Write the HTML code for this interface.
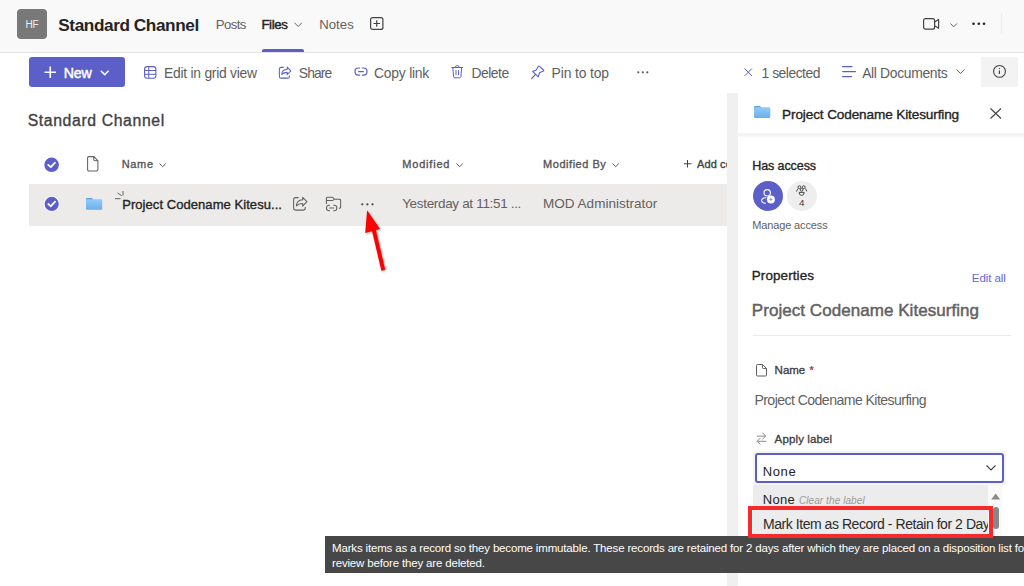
<!DOCTYPE html>
<html><head><meta charset="utf-8">
<style>
html,body{margin:0;padding:0;width:1024px;height:586px;overflow:hidden;background:#ffffff;font-family:"Liberation Sans",sans-serif;}
.a{position:absolute;}
.t{position:absolute;white-space:nowrap;line-height:1;font-family:"Liberation Sans",sans-serif;}
svg{position:absolute;overflow:visible;}
</style></head><body>
<!-- header -->
<div class="a" style="left:0;top:0;width:1024px;height:52px;background:#f9f9f9;"></div>
<div class="a" style="left:0;top:52px;width:1024px;height:1px;background:#e3e3e3;"></div>
<div class="a" style="left:17px;top:9px;width:30px;height:30px;border-radius:4px;background:#787878;"></div>
<div class="t" style="left:25.6px;top:19.9px;font-size:10px;color:#f0f0f0;letter-spacing:-0.4px;">HF</div>
<div class="a" style="left:261.5px;top:49px;width:42.5px;height:3px;border-radius:2px 2px 0 0;background:#5b5fc7;"></div>
<!-- files chevron -->
<svg style="left:294px;top:22px" width="9" height="6"><path d="M0.5 0.8 L4.2 4.5 L7.9 0.8" fill="none" stroke="#616161" stroke-width="1"/></svg>
<!-- plus square -->
<svg style="left:370px;top:17px" width="14" height="13"><rect x="0.6" y="0.6" width="12.3" height="11.8" rx="2" fill="none" stroke="#424242" stroke-width="1.2"/><path d="M6.75 3.2 V9.8 M3.5 6.5 H10" stroke="#424242" stroke-width="1.2"/></svg>
<!-- camera -->
<svg style="left:923px;top:17.5px" width="17" height="12"><rect x="0.6" y="0.6" width="11" height="10.6" rx="2" fill="none" stroke="#424242" stroke-width="1.2"/><path d="M11.6 4 L15.6 1.6 V10.2 L11.6 7.8" fill="none" stroke="#424242" stroke-width="1.2" stroke-linejoin="round"/></svg>
<svg style="left:950px;top:22.5px" width="8" height="5"><path d="M0.5 0.5 L3.7 3.8 L6.9 0.5" fill="none" stroke="#616161" stroke-width="1"/></svg>
<svg style="left:972px;top:22px" width="14" height="4"><circle cx="1.5" cy="1.8" r="1.3" fill="#242424"/><circle cx="6.8" cy="1.8" r="1.3" fill="#242424"/><circle cx="12" cy="1.8" r="1.3" fill="#242424"/></svg>
<div class="a" style="left:1001px;top:13px;width:1px;height:21px;background:#ececec;"></div>

<!-- toolbar -->
<div class="a" style="left:29px;top:57px;width:96px;height:30px;border-radius:3px;background:#5b5fc7;"></div>
<svg style="left:43.5px;top:65.5px" width="13" height="13"><path d="M6.25 0.5 V12 M0.5 6.25 H12" stroke="#fff" stroke-width="1.6"/></svg>
<svg style="left:100px;top:70px" width="10" height="6"><path d="M0.8 0.8 L4.7 4.6 L8.6 0.8" fill="none" stroke="#fff" stroke-width="1.5"/></svg>
<!-- grid icon -->
<svg style="left:144px;top:65.5px" width="13" height="13"><rect x="0.6" y="0.6" width="11.3" height="11.6" rx="2.5" fill="none" stroke="#5b5fc7" stroke-width="1.1"/><path d="M4.8 0.6 V12.2 M0.6 4.5 H11.9 M0.6 8.3 H11.9" stroke="#5b5fc7" stroke-width="1"/></svg>
<!-- share icon -->
<svg style="left:278px;top:65.5px" width="16" height="15"><g transform="scale(0.86)"><path d="M6.6 1.6 H3.6 Q1.6 1.6 1.6 3.6 V12.1 Q1.6 14.1 3.6 14.1 H11.3 Q13.3 14.1 13.3 12.1 V11" fill="none" stroke="#5b5fc7" stroke-width="1.2"/><path d="M4.4 9.9 Q4.6 4.2 10.7 3.8 V1.3 L14.9 5.7 L10.7 10.2 V7.4 Q6.5 7.4 4.4 9.9 Z" fill="none" stroke="#5b5fc7" stroke-width="1.2" stroke-linejoin="round"/></g></svg>
<!-- link icon -->
<svg style="left:353.5px;top:67px" width="15" height="10"><path d="M5.6 1 H4.3 Q1 1 1 4.6 Q1 8.2 4.3 8.2 H5.6 M8.4 1 H9.7 Q13 1 13 4.6 Q13 8.2 9.7 8.2 H8.4 M4.6 4.6 H9.4" fill="none" stroke="#5b5fc7" stroke-width="1.2" stroke-linecap="round"/></svg>
<!-- trash -->
<svg style="left:451px;top:65px" width="13" height="14"><path d="M0.5 2.5 H12 M4.3 2.5 Q4.3 0.6 6.25 0.6 Q8.2 0.6 8.2 2.5 M1.8 2.5 L2.6 11.6 Q2.8 12.8 4 12.8 H8.5 Q9.7 12.8 9.9 11.6 L10.7 2.5 M5 5.2 V10.2 M7.5 5.2 V10.2" fill="none" stroke="#5b5fc7" stroke-width="1"/></svg>
<!-- pin -->
<svg style="left:527px;top:62px" width="20" height="20"><path d="M5.6 9.4 L9.2 8.0 L11.3 4.5 Q11.9 3.7 12.6 4.3 L16.5 8.0 Q17.1 8.7 16.3 9.1 L12.6 10.8 L11.2 14.9 Z M4.6 16.6 L8 12.8" fill="none" stroke="#5b5fc7" stroke-width="1.1" stroke-linejoin="round" stroke-linecap="round"/></svg>
<svg style="left:637px;top:71px" width="12" height="3"><circle cx="1.3" cy="1.3" r="1.1" fill="#5e5e5e"/><circle cx="5.8" cy="1.3" r="1.1" fill="#5e5e5e"/><circle cx="10.3" cy="1.3" r="1.1" fill="#5e5e5e"/></svg>
<!-- right toolbar -->
<svg style="left:743.5px;top:67.5px" width="9" height="9"><path d="M0.5 0.5 L8 8 M8 0.5 L0.5 8" stroke="#5b5fc7" stroke-width="1"/></svg>
<svg style="left:842px;top:65px" width="15" height="13"><path d="M0.6 1.6 H10 M0.6 6.6 H13.5 M0.6 11.6 H9.5" stroke="#5b5fc7" stroke-width="1.2" stroke-linecap="round"/></svg>
<svg style="left:956px;top:69px" width="10" height="6"><path d="M0.5 0.5 L4.5 4.5 L8.5 0.5" fill="none" stroke="#616161" stroke-width="1"/></svg>
<div class="a" style="left:981px;top:57px;width:37px;height:30px;background:#f3f3f3;border-radius:2px;"></div>
<svg style="left:993px;top:65px" width="14" height="14"><circle cx="6.5" cy="6.4" r="5.9" fill="none" stroke="#424242" stroke-width="1.1"/><path d="M6.4 5.4 V9" stroke="#424242" stroke-width="1.2"/><circle cx="6.4" cy="3.6" r="0.7" fill="#424242"/></svg>

<!-- list area -->
<svg style="left:43.5px;top:156.5px" width="16" height="16"><circle cx="7.6" cy="7.8" r="7.3" fill="#5b5fc7"/><path d="M4.2 7.9 L6.8 10.1 L11 5.6" fill="none" stroke="#fff" stroke-width="1.8" stroke-linecap="round" stroke-linejoin="round"/></svg>
<svg style="left:86.5px;top:156px" width="13" height="16"><path d="M1.9 0.6 H6.9 L10.9 4.6 V13.5 Q10.9 14.9 9.5 14.9 H1.9 Q0.6 14.9 0.6 13.5 V1.9 Q0.6 0.6 1.9 0.6 Z M6.7 0.8 V3.3 Q6.7 4.8 8.2 4.8 H10.7" fill="none" stroke="#616161" stroke-width="1.05"/></svg>
<svg style="left:159px;top:163px" width="8" height="5"><path d="M0.5 0.5 L3.7 3.7 L6.9 0.5" fill="none" stroke="#616161" stroke-width="1"/></svg>
<svg style="left:456px;top:163px" width="8" height="5"><path d="M0.5 0.5 L3.7 3.7 L6.9 0.5" fill="none" stroke="#616161" stroke-width="1"/></svg>
<svg style="left:612px;top:163px" width="8" height="5"><path d="M0.5 0.5 L3.7 3.7 L6.9 0.5" fill="none" stroke="#616161" stroke-width="1"/></svg>
<svg style="left:684px;top:160px" width="8" height="8"><path d="M3.5 0 V7.5 M0 3.75 H7.5" stroke="#424242" stroke-width="1"/></svg>
<div style="position:absolute;left:697px;top:159.3px;width:30px;height:14px;overflow:hidden;"><div class="t" style="left:0;top:0;font-size:11px;font-weight:400;color:#424242;letter-spacing:0.1px;-webkit-text-stroke:0.35px #424242;">Add column</div></div>

<div class="a" style="left:29px;top:184px;width:698px;height:42px;background:#edebe9;"></div>
<svg style="left:42.5px;top:195px" width="18" height="18"><circle cx="8.7" cy="8.9" r="8" fill="#fff"/><circle cx="8.7" cy="8.9" r="7.1" fill="#5b5fc7"/><path d="M5.3 9 L7.9 11.2 L12.1 6.7" fill="none" stroke="#fff" stroke-width="1.8" stroke-linecap="round" stroke-linejoin="round"/></svg>
<svg style="left:86px;top:198px" width="17" height="12"><defs><linearGradient id="fg" x1="0" y1="0" x2="0" y2="1"><stop offset="0" stop-color="#93cbf7"/><stop offset="1" stop-color="#6aafec"/></linearGradient></defs><path d="M0 1 Q0 0 1 0 H6 L7.2 1.2 V4 H0 Z" fill="#5aa2e4"/><rect x="0" y="1.2" width="16.2" height="10.6" rx="0.8" fill="url(#fg)"/></svg>
<svg style="left:114px;top:190px" width="11" height="11"><path d="M9 1 V5.5 M3.5 3 L7.8 5.8 M1 8.7 H6.5" stroke="#616161" stroke-width="1"/></svg>
<svg style="left:292px;top:196px" width="17" height="16"><path d="M6.6 1.6 H3.6 Q1.6 1.6 1.6 3.6 V12.1 Q1.6 14.1 3.6 14.1 H11.3 Q13.3 14.1 13.3 12.1 V11" fill="none" stroke="#616161" stroke-width="1.05"/><path d="M4.4 9.9 Q4.6 4.2 10.7 3.8 V1.3 L14.9 5.7 L10.7 10.2 V7.4 Q6.5 7.4 4.4 9.9 Z" fill="none" stroke="#616161" stroke-width="1.05" stroke-linejoin="round"/></svg>
<svg style="left:325px;top:196px" width="17" height="17"><path d="M1.4 8 V2.2 Q1.4 1.3 2.3 1.3 H7.2 Q7.8 1.3 8.3 1.8 L9.3 3.2 H14.7 Q15.6 3.2 15.6 4.1 V11.3 Q15.6 12.2 14.7 12.2 H13.9 M1.4 4.4 H7.3 Q8.4 4.4 9.3 3.2" fill="none" stroke="#616161" stroke-width="1.05"/><path d="M5 9.2 H4.3 Q1.5 9.2 1.5 12 Q1.5 14.8 4.3 14.8 H5 M8.4 9.2 H9.1 Q11.9 9.2 11.9 12 Q11.9 14.8 9.1 14.8 H8.4 M4.3 12 H9.1" fill="none" stroke="#616161" stroke-width="1.05"/></svg>
<svg style="left:361px;top:203px" width="13" height="3"><circle cx="1.3" cy="1.3" r="1.1" fill="#424242"/><circle cx="6.4" cy="1.3" r="1.1" fill="#424242"/><circle cx="11.5" cy="1.3" r="1.1" fill="#424242"/></svg>
<!-- red arrow -->
<svg style="left:0;top:0;filter:drop-shadow(1px 1px 0.8px rgba(0,0,0,0.35))" width="1024" height="586"><path d="M383.3 270.2 L373.6 229" stroke="#ff0000" stroke-width="4" stroke-linecap="butt"/><path d="M367.1 210.2 L365.2 233 L380 229 Z" fill="#ff0000"/></svg>

<!-- divider strip -->
<div class="a" style="left:726.5px;top:93px;width:11.5px;height:493px;background:#f0f0f0;"></div>

<!-- panel -->
<svg style="left:754px;top:105.7px" width="17" height="12"><path d="M0 1 Q0 0 1 0 H6 L7.2 1.2 V4 H0 Z" fill="#5aa2e4"/><rect x="0" y="1.2" width="16.3" height="10.7" rx="0.8" fill="url(#fg)"/></svg>
<svg style="left:989.5px;top:107.5px" width="12" height="11"><path d="M0.5 0.5 L11 10.5 M11 0.5 L0.5 10.5" stroke="#424242" stroke-width="1.1"/></svg>
<div class="a" style="left:738px;top:133px;width:286px;height:4px;background:linear-gradient(#f5f5f5,#f3f3f3 50%,#fcfcfc);"></div>

<svg style="left:753px;top:181px" width="31" height="31"><circle cx="15" cy="15" r="15" fill="#5b5fc7"/><circle cx="14.2" cy="11.8" r="3.2" fill="none" stroke="#fff" stroke-width="1.1"/><path d="M13.2 16.7 Q8.6 16.6 8.6 19.8 Q8.7 22.2 12.8 22.2" fill="none" stroke="#fff" stroke-width="1.1"/><circle cx="17.9" cy="18.4" r="4" fill="#fff"/><path d="M17.9 16.6 V20.2 M16.1 18.4 H19.7" stroke="#8f92d9" stroke-width="0.9"/></svg>
<svg style="left:787px;top:181px" width="31" height="31"><circle cx="15" cy="15" r="15" fill="#eeeeee"/><circle cx="12.4" cy="6.2" r="1.45" fill="none" stroke="#424242" stroke-width="0.95"/><circle cx="16.7" cy="6.2" r="1.45" fill="none" stroke="#424242" stroke-width="0.95"/><circle cx="14.6" cy="8.9" r="1.35" fill="none" stroke="#424242" stroke-width="0.95"/><path d="M12.1 11.4 H17.2 Q17.2 14.4 14.65 14.4 Q12.1 14.4 12.1 11.4 Z M9.7 10.6 Q9.6 8.4 11.3 7.7 M19.7 10.4 Q19.8 8.4 18 7.7" fill="none" stroke="#424242" stroke-width="0.95"/></svg>
<div class="t" style="left:799px;top:198px;font-size:9.8px;color:#424242;">4</div>

<div class="a" style="left:753px;top:335px;width:258px;height:1px;background:#ebebeb;"></div>
<svg style="left:755.5px;top:363.5px" width="12" height="13"><path d="M1.4 0.5 H6.5 L10.5 4.5 V11 Q10.5 12 9.5 12 H1.5 Q0.5 12 0.5 11 V1.5 Q0.5 0.5 1.4 0.5 Z M6.4 0.7 V3.5 Q6.4 4.5 7.4 4.5 H10.3" fill="none" stroke="#616161" stroke-width="1"/></svg>
<div class="t" style="left:809.5px;top:365px;font-size:11px;font-weight:700;color:#c4314b;">*</div>
<svg style="left:750px;top:428px" width="20" height="20"><path d="M6.8 8.1 H15.8 M12.4 4.7 L15.8 8.1 L12.4 11.4 M16.2 13.3 H7.1 M10.3 10.1 L7.1 13.3 L10.3 16.5" fill="none" stroke="#8a8a8a" stroke-width="1"/></svg>

<!-- dropdown -->
<div class="a" style="left:753px;top:451px;width:253px;height:34px;border-radius:3px;background:#f5f5f5;"></div>
<div class="a" style="left:755px;top:453px;width:245px;height:26px;border:2px solid #5b5fc7;border-radius:3px;background:#fff;"></div>
<svg style="left:985.5px;top:464.5px" width="11" height="7"><path d="M0.5 0.5 L5 5 L9.5 0.5" fill="none" stroke="#424242" stroke-width="1.1"/></svg>
<div class="a" style="left:753px;top:485px;width:235px;height:52px;background:#ececec;"></div>
<div class="a" style="left:987.5px;top:485px;width:14px;height:52px;background:#f9f9f9;"></div>
<svg style="left:990.5px;top:492.5px" width="10" height="7"><path d="M0.2 6.5 L4.7 0.5 L9.2 6.5 Z" fill="#8a8a8a"/></svg>
<div class="a" style="left:993px;top:507px;width:6px;height:21.5px;border-radius:3px;background:#878787;"></div>

<div class="t" style="left:58.3px;top:16.8px;font-size:17.2px;font-weight:700;color:#242424;letter-spacing:-0.41px;">Standard Channel</div>
<div class="t" style="left:215.8px;top:18.3px;font-size:13.2px;font-weight:400;color:#616161;letter-spacing:-0.60px;">Posts</div>
<div class="t" style="left:261.4px;top:18.3px;font-size:13.2px;font-weight:400;color:#242424;letter-spacing:-0.34px;-webkit-text-stroke:0.45px #242424;">Files</div>
<div class="t" style="left:319.2px;top:18.3px;font-size:13.2px;font-weight:400;color:#616161;letter-spacing:0.03px;">Notes</div>
<div class="t" style="left:63.8px;top:66.0px;font-size:14.2px;font-weight:400;color:#ffffff;letter-spacing:-0.19px;-webkit-text-stroke:0.45px #ffffff;">New</div>
<div class="t" style="left:164.0px;top:66.9px;font-size:13.9px;font-weight:400;color:#5e5e5e;letter-spacing:-0.26px;">Edit in grid view</div>
<div class="t" style="left:298.8px;top:66.9px;font-size:13.9px;font-weight:400;color:#5e5e5e;letter-spacing:-0.93px;">Share</div>
<div class="t" style="left:374.0px;top:66.9px;font-size:13.9px;font-weight:400;color:#5e5e5e;letter-spacing:-0.23px;">Copy link</div>
<div class="t" style="left:471.4px;top:66.9px;font-size:13.9px;font-weight:400;color:#5e5e5e;letter-spacing:-0.48px;">Delete</div>
<div class="t" style="left:551.6px;top:66.9px;font-size:13.9px;font-weight:400;color:#5e5e5e;letter-spacing:-0.14px;">Pin to top</div>
<div class="t" style="left:761.6px;top:66.9px;font-size:13.9px;font-weight:400;color:#5e5e5e;letter-spacing:-0.50px;">1 selected</div>
<div class="t" style="left:862.2px;top:66.9px;font-size:13.9px;font-weight:400;color:#5e5e5e;letter-spacing:-0.34px;">All Documents</div>
<div class="t" style="left:27.7px;top:112.6px;font-size:15.8px;font-weight:400;color:#424242;letter-spacing:0.61px;-webkit-text-stroke:0.35px #424242;">Standard Channel</div>
<div class="t" style="left:121.7px;top:159.3px;font-size:11.0px;font-weight:400;color:#555555;letter-spacing:0.66px;-webkit-text-stroke:0.35px #555555;">Name</div>
<div class="t" style="left:402.3px;top:159.3px;font-size:11.0px;font-weight:400;color:#555555;letter-spacing:0.79px;-webkit-text-stroke:0.35px #555555;">Modified</div>
<div class="t" style="left:543.1px;top:159.3px;font-size:11.0px;font-weight:400;color:#555555;letter-spacing:0.53px;-webkit-text-stroke:0.35px #555555;">Modified By</div>
<div class="t" style="left:122.2px;top:198.0px;font-size:13px;font-weight:400;color:#242424;letter-spacing:0.06px;-webkit-text-stroke:0.35px #242424;">Project Codename Kitesu...</div>
<div class="t" style="left:402.2px;top:197.0px;font-size:13.5px;font-weight:400;color:#616161;letter-spacing:-0.33px;">Yesterday at 11:51 ...</div>
<div class="t" style="left:543.0px;top:197.0px;font-size:13.5px;font-weight:400;color:#616161;letter-spacing:0.02px;">MOD Administrator</div>
<div class="t" style="left:782.1px;top:107.7px;font-size:13.6px;font-weight:400;color:#242424;letter-spacing:-0.13px;-webkit-text-stroke:0.35px #242424;">Project Codename Kitesurfing</div>
<div class="t" style="left:752.2px;top:160.1px;font-size:12.5px;font-weight:400;color:#242424;letter-spacing:-0.08px;-webkit-text-stroke:0.35px #242424;">Has access</div>
<div class="t" style="left:752.3px;top:219.8px;font-size:11px;font-weight:400;color:#616161;letter-spacing:-0.14px;">Manage access</div>
<div class="t" style="left:751.8px;top:268.8px;font-size:13.4px;font-weight:400;color:#242424;letter-spacing:0.12px;-webkit-text-stroke:0.35px #242424;">Properties</div>
<div class="t" style="left:971.8px;top:272.2px;font-size:11.6px;font-weight:400;color:#6367cf;letter-spacing:-0.10px;">Edit all</div>
<div class="t" style="left:751.8px;top:302.1px;font-size:17px;font-weight:400;color:#616161;letter-spacing:0.05px;-webkit-text-stroke:0.45px #616161;">Project Codename Kitesurfing</div>
<div class="t" style="left:774.6px;top:365.0px;font-size:11.5px;font-weight:400;color:#424242;letter-spacing:-0.00px;-webkit-text-stroke:0.35px #424242;">Name</div>
<div class="t" style="left:754.4px;top:392.6px;font-size:14.1px;font-weight:400;color:#616161;letter-spacing:-0.56px;">Project Codename Kitesurfing</div>
<div class="t" style="left:774.6px;top:434.3px;font-size:11.5px;font-weight:400;color:#424242;letter-spacing:0.13px;-webkit-text-stroke:0.35px #424242;">Apply label</div>
<div class="t" style="left:762.7px;top:464.8px;font-size:13px;font-weight:400;color:#242424;letter-spacing:0.63px;">None</div>
<div class="t" style="left:762.7px;top:493.4px;font-size:13px;font-weight:400;color:#242424;letter-spacing:0.33px;">None</div>
<div class="t" style="left:798.9px;top:496.1px;font-size:10px;font-weight:400;color:#9a9a9a;letter-spacing:0.09px;font-style:italic;">Clear the label</div>

<div style="position:absolute;left:753px;top:510px;width:235px;height:24px;overflow:hidden;"><div class="t" style="left:10px;top:7.3px;font-size:14px;font-weight:400;color:#2b2b2b;letter-spacing:-0.45px;">Mark Item as Record - Retain for 2 Days</div></div>

<!-- tooltip -->
<div class="a" style="left:325px;top:536px;width:699px;height:37px;background:#474747;"></div>
<div class="t" style="left:332px;top:543px;font-size:11.5px;color:#ffffff;letter-spacing:-0.165px;">Marks items as a record so they become immutable. These records are retained for 2 days after which they are placed on a disposition list for</div>
<div class="t" style="left:332px;top:557.8px;font-size:11.5px;color:#ffffff;letter-spacing:-0.165px;">review before they are deleted.</div>
<div class="a" style="left:748px;top:506px;width:237px;height:23.5px;border:4px solid #f42a2c;"></div>
</body></html>
